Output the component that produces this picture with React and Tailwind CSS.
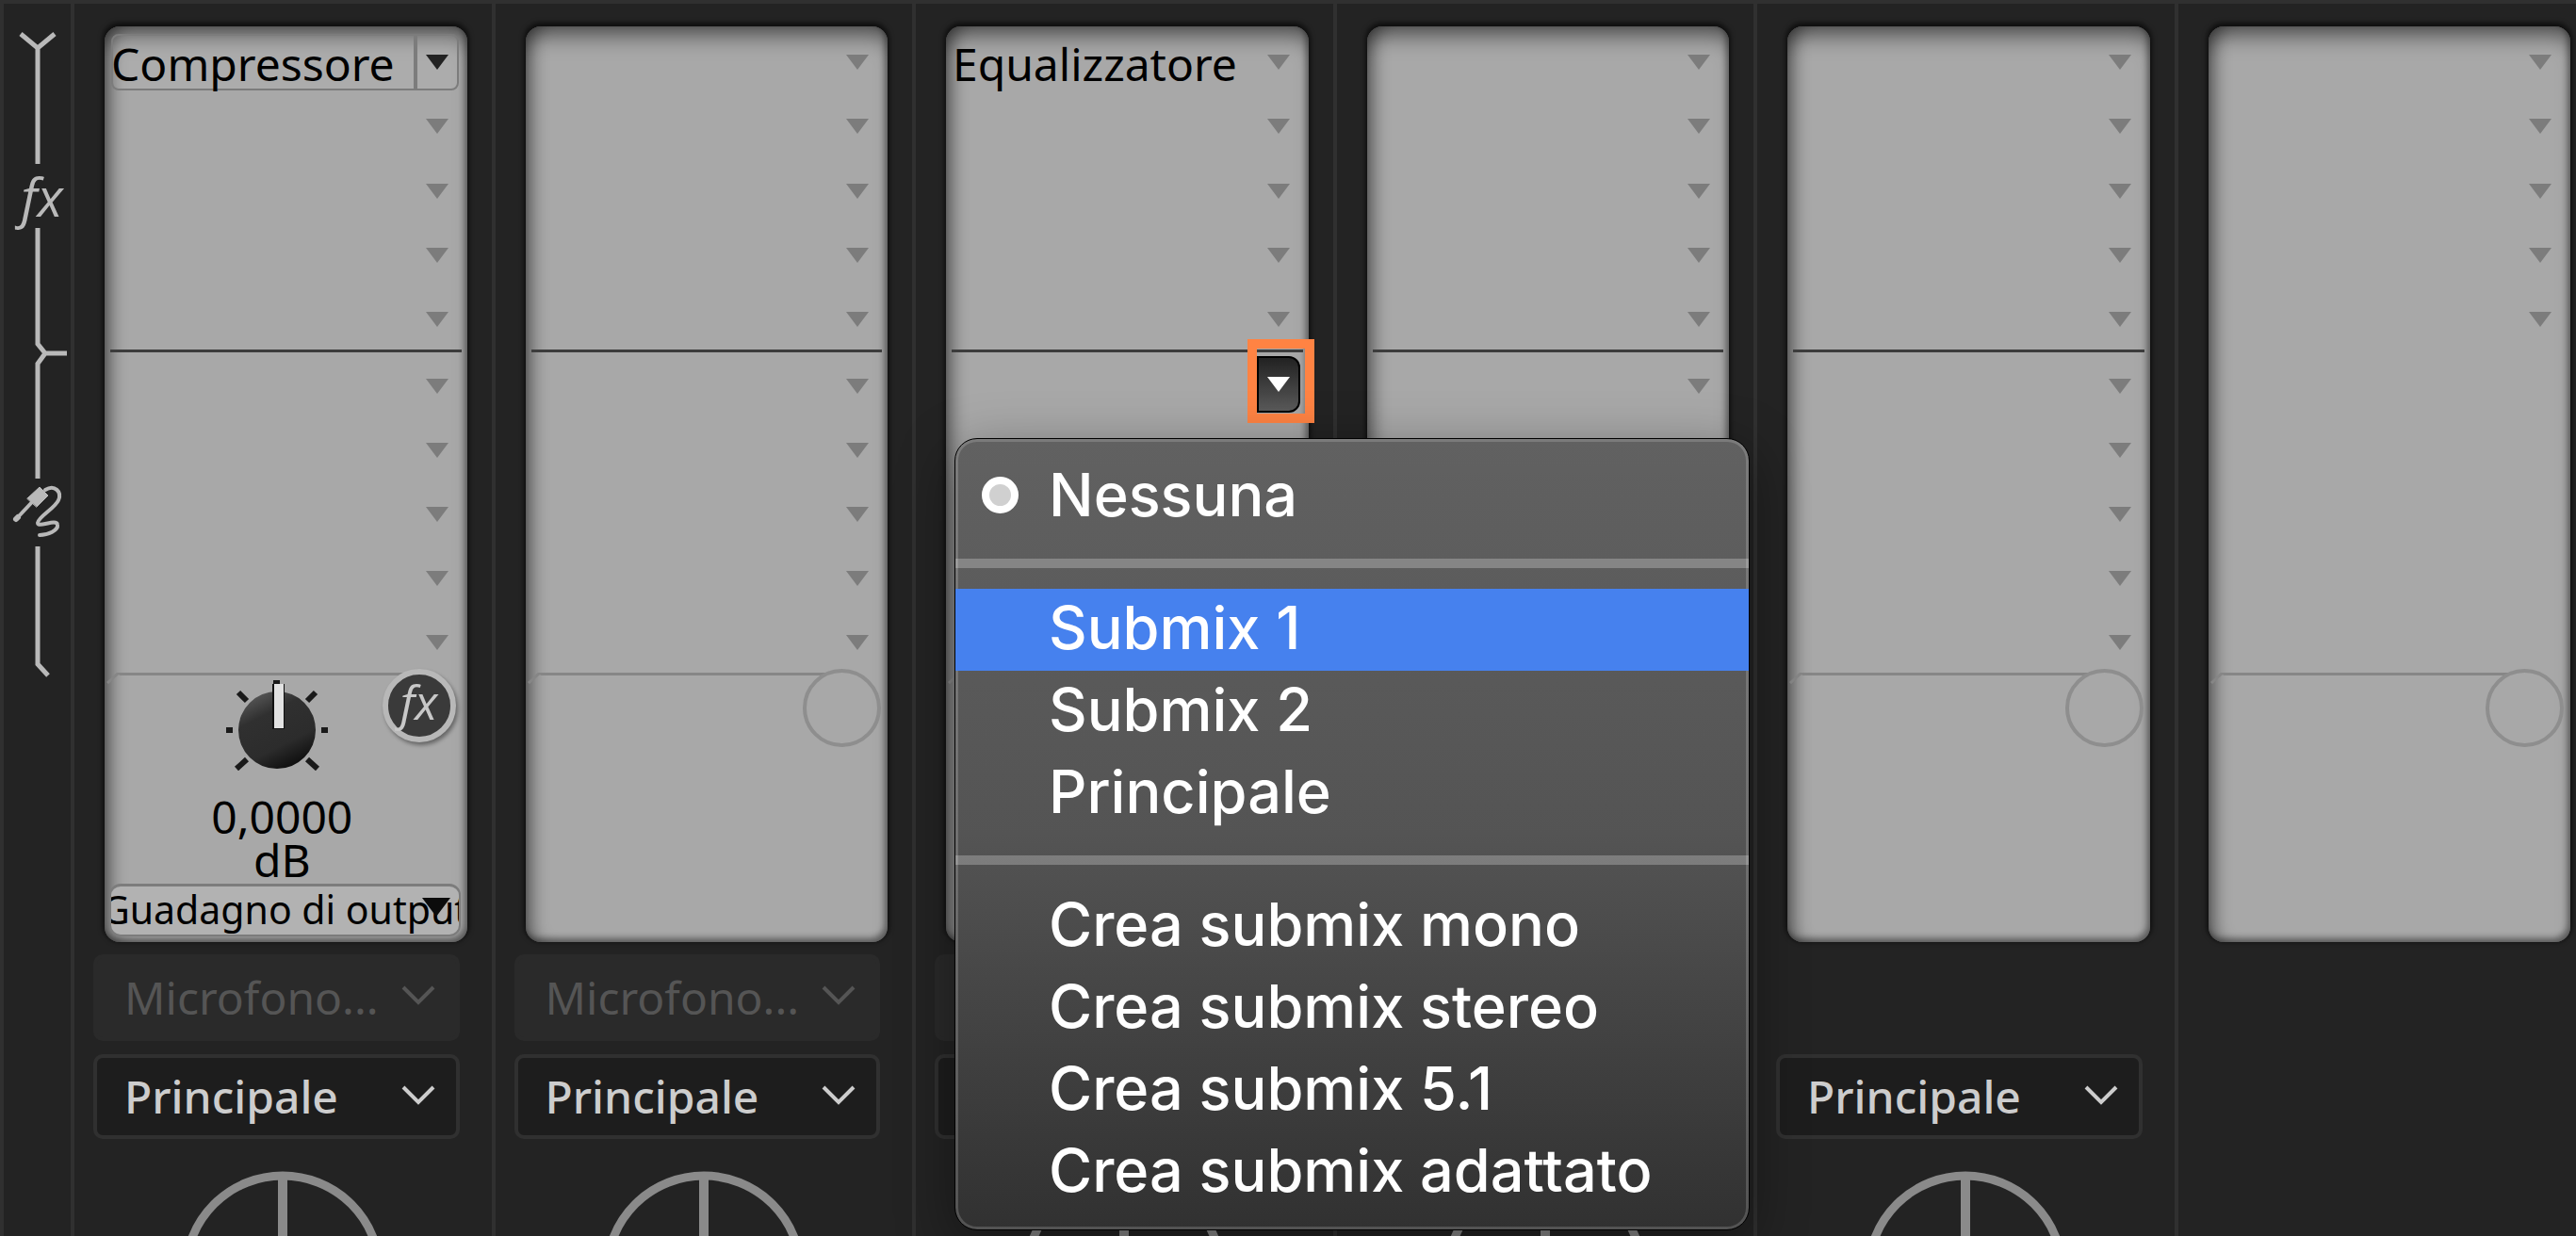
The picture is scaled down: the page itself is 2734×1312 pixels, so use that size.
import React from "react";

// An empty route is a select without a current choice, null leaves the place free
const strips = [
  { id: 1, effects: ["Compressore"], sends: true, knob: true, input: "Microfono...", output: "Principale" },
  { id: 2, effects: [], sends: true, input: "Microfono...", output: "Principale" },
  { id: 3, effects: ["Equalizzatore"], sends: true, menu: true, input: "", output: "" },
  { id: 4, effects: [], sends: true, input: "", output: "" },
  { id: 5, effects: [], sends: true, input: null, output: "Principale" },
  { id: 6, effects: [], sends: false, input: null, output: null },
];

const menuGroups = [
  ["Nessuna"],
  ["Submix 1", "Submix 2", "Principale"],
  ["Crea submix mono", "Crea submix stereo", "Crea submix 5.1", "Crea submix adattato"],
];

const SLOTS = [0, 1, 2, 3, 4];

function Triangle({ className }) {
  return (
    <svg viewBox="0 0 24 16" className={className} aria-hidden="true">
      <path d="M0 0H24L12 16Z" fill="currentColor" />
    </svg>
  );
}

function Rail() {
  return (
    <aside className="flex w-[71px] shrink-0 flex-col pt-7 text-[#b9b9b9]">
      <svg viewBox="4 32 71 142" className="h-[142px] w-full" fill="none" stroke="currentColor" strokeWidth="5">
        <path d="M22 36L40 51L58 36M40 50V174" />
      </svg>
      <div className="h-[68px] pl-2.5 text-center font-['Open_Sans',sans-serif] text-[56px] leading-[68px] font-medium italic">
        fx
      </div>
      <svg viewBox="4 242 71 268" className="h-[268px] w-full" fill="none" stroke="currentColor" strokeWidth="5">
        <path d="M40 242V365L48 375L40 386V508M47 375H71" />
      </svg>
      {/* patch cable */}
      <svg viewBox="3 510 71 68" className="h-[68px] w-full" fill="none" stroke="currentColor" strokeLinecap="round">
        <path d="M17 550L33 533" strokeWidth="4" />
        <path d="M16 551L18 549" strokeWidth="6" />
        <path d="M28 529L41 517L50 526L38 538Z" fill="currentColor" strokeWidth="1" />
        <path
          d="M47 520C57 514 65 522 61 531C57 540 40 548 39 555C39 561 59 550 60 557C61 563 50 568 41 568"
          strokeWidth="4"
        />
      </svg>
      <svg viewBox="4 578 71 144" className="h-[144px] w-full" fill="none" stroke="currentColor" strokeWidth="5">
        <path d="M40 580V705L51 717" />
      </svg>
    </aside>
  );
}

function SendMenu() {
  return (
    <div
      role="menu"
      className="absolute top-[91px] left-[9px] z-20 w-[844px] overflow-hidden rounded-3xl border border-black bg-linear-to-b from-[#616161] via-[#545454] to-[#313131] pt-[18px] pb-[17px] shadow-[0_16px_60px_rgba(0,0,0,0.4),inset_0_0_0_3px_rgba(255,255,255,0.17)]"
    >
      {menuGroups.map((group, g) => (
        <div key={group[0]}>
          {g > 0 && <hr className="my-[22px] h-[10px] border-0 bg-white/25" />}
          {group.map((item) => (
            <button
              key={item}
              type="button"
              role="menuitem"
              className={`flex h-[87px] w-full items-center pb-1 pl-7 text-left font-['Inter',sans-serif] text-[63px] leading-[83px] font-medium text-white ${
                item === "Submix 1" ? "bg-[#4681ee]" : ""
              }`}
            >
              <span className="flex w-[71px] shrink-0">
                {item === "Nessuna" && (
                  <span className="size-[39px] rounded-full border-8 border-white bg-[#d0d0d0]" />
                )}
              </span>
              {item}
            </button>
          ))}
        </div>
      ))}
    </div>
  );
}

function Slot({ name, boxed, active, label }) {
  return (
    <div className="relative flex min-h-0 flex-1 pt-1 pr-[9px] pl-[7px]">
      <div
        className={`flex min-w-0 flex-1 ${
          boxed ? "mt-0.5 mb-0.5 rounded-lg border-2 border-[#7c7c7c] bg-white/5" : ""
        }`}
      >
        <div
          className={`mr-2 flex min-w-0 flex-1 items-center pt-1 text-[48px] leading-[56px] whitespace-nowrap text-black ${
            boxed ? "-ml-0.5" : ""
          }`}
        >
          {name}
        </div>
        <button
          type="button"
          aria-label={label}
          className={`flex w-[46px] shrink-0 items-center justify-center ${
            boxed ? "border-l-4 border-[#7c7c7c] text-[#222]" : ""
          } ${
            active
              ? "h-[60px] rounded-r-xl border-2 border-black bg-linear-to-b from-[#222] to-[#5a5a5a] text-white"
              : ""
          } ${!boxed && !active ? "text-[#7c7c7c]" : ""}`}
        >
          <Triangle className="h-4 w-6" />
        </button>
      </div>
      {active && (
        <>
          <span className="pointer-events-none absolute -top-3.5 -right-1.5 z-10 h-[89px] w-[71px] border-10 border-[#ff8343]" />
          <SendMenu />
        </>
      )}
    </div>
  );
}

function GainKnob() {
  return (
    <div className="relative -mt-1 ml-[129px] w-[108px]">
      <input type="range" min="-60" max="60" defaultValue="0" aria-label="Guadagno" className="sr-only" />
      <svg viewBox="0 0 108 96" className="h-24 w-[108px]">
        <defs>
          <linearGradient id="knob" x1="0.2" y1="0" x2="0.7" y2="1">
            <stop offset="0" stopColor="#5c5c5c" />
            <stop offset="0.3" stopColor="#303030" />
            <stop offset="0.7" stopColor="#2c2c2c" />
            <stop offset="1" stopColor="#0c0c0c" />
          </linearGradient>
        </defs>
        <path
          d="M50 2H57M0 53H7M101 53H108M13 13L22 22M95 13L86 22M22 84L11 94M86 84L97 94"
          stroke="#1a1a1a"
          strokeWidth="6"
          fill="none"
        />
        <circle cx="54" cy="53" r="41" fill="url(#knob)" />
        <path d="M49 4H62V52H49Z" fill="#111" />
        <path d="M51 4H61V51H51Z" fill="#e2e2e2" />
      </svg>
    </div>
  );
}

function StripFooter({ knob }) {
  return (
    <div className="relative h-[286px]">
      <div className="flex h-3 pr-16 pl-0.5 text-[#868686]">
        <svg viewBox="0 0 14 12" className="h-3 w-3.5" fill="none" stroke="currentColor" strokeWidth="3">
          <path d="M1 11L12 1H14" />
        </svg>
        <div className="h-[3px] flex-1 bg-current" />
      </div>
      {knob ? (
        <>
          <GainKnob />
          <button
            type="button"
            className="absolute -top-1 right-3 flex size-[78px] items-center justify-center rounded-full border-[6px] border-[#b8b8b8] bg-[#3a3a3a] pb-2 font-['Open_Sans',sans-serif] text-[50px] leading-[56px] text-[#c8c8c8] italic shadow-[2px_3px_4px_rgba(0,0,0,0.4)]"
          >
            fx
          </button>
          <div className="mt-[26px] mr-2 text-center text-[48px] leading-[46px] text-black">
            0,0000
            <br />
            dB
          </div>
          <button
            type="button"
            className="relative mt-0.5 mr-2 ml-[5px] flex h-14 w-[373px] items-center justify-center overflow-hidden rounded-xl border-2 border-t-[3px] border-[#7c7c7c] bg-[#b2b2b2] pb-1 text-[41px] leading-[48px] text-black"
          >
            <span className="shrink-0 whitespace-nowrap">Guadagno di output</span>
            <Triangle className="absolute top-3 right-1.5 h-5 w-9 text-[#0c0c0c]" />
          </button>
        </>
      ) : (
        <span className="absolute -top-1 right-[7px] size-[83px] rounded-full border-4 border-[#8e8e8e]" />
      )}
    </div>
  );
}

function RouteSelect({ value, label, disabled = false }) {
  return (
    <div className="relative">
      <select
        disabled={disabled}
        aria-label={label}
        className={`block w-full appearance-none rounded-[10px] border-4 pl-[29px] text-[48px] leading-[66px] opacity-100 ${
          disabled
            ? "h-[92px] border-[#2a2a2a] bg-[#2a2a2a] text-[#555]"
            : "h-[90px] border-[#303030] bg-[#1d1d1d] font-medium text-[#cdcdcd]"
        }`}
      >
        <option>{value}</option>
      </select>
      <svg
        viewBox="0 0 36 22"
        className={`pointer-events-none absolute top-8 right-[26px] h-[22px] w-9 ${disabled ? "text-[#555]" : "text-[#cdcdcd]"}`}
        fill="none"
        stroke="currentColor"
        strokeWidth="4"
      >
        <path d="M2 3L18 19L34 3" />
      </svg>
    </div>
  );
}

function PanDial() {
  return (
    <div className="relative mx-auto mt-[34px] w-[216px]">
      <input type="range" min="-100" max="100" defaultValue="0" aria-label="Bilanciamento" className="sr-only" />
      <svg viewBox="0 0 216 216" className="size-[216px]" fill="none" stroke="#8a8a8a">
        <circle cx="108" cy="108" r="103" strokeWidth="9" />
        <path d="M108 6V108" strokeWidth="10" />
      </svg>
    </div>
  );
}

function Strip({ strip }) {
  return (
    <section className="min-w-0 flex-1 border-l-4 border-[#303030] pt-6">
      <div className="mr-[26px] ml-8 rounded-2xl bg-[#a8a8a8] pt-0.5 shadow-[0_-2px_5px_2px_rgba(0,0,0,0.6),inset_0_20px_22px_-10px_rgba(0,0,0,0.5),inset_14px_0_18px_-8px_rgba(0,0,0,0.45),inset_-3px_-4px_6px_rgba(0,0,0,0.4)]">
        <div className="flex h-[341px] flex-col">
          {SLOTS.map((i) => (
            <Slot
              key={i}
              name={strip.effects[i]}
              boxed={strip.knob && i === 0}
              label={`Effetto ${i + 1}`}
            />
          ))}
        </div>
        <div className={`mx-1.5 h-[3px] ${strip.sends ? "bg-[#3c3c3c]" : ""}`} />
        <div className="flex h-[340px] flex-col">
          {strip.sends &&
            SLOTS.map((i) => (
              <Slot key={i} active={strip.menu && i === 0} label={`Mandata ${i + 1}`} />
            ))}
        </div>
        <StripFooter knob={strip.knob} />
      </div>

      <div className="mt-[13px] mr-[34px] ml-5">
        {strip.input !== null ? (
          <RouteSelect value={strip.input} label="Ingresso" disabled />
        ) : (
          <div className="h-[92px]" />
        )}
        <div className="mt-3.5">
          {strip.output !== null && <RouteSelect value={strip.output} label="Uscita" />}
        </div>
      </div>
      {strip.output !== null && <PanDial />}
    </section>
  );
}

export default function App() {
  return (
    <main className="flex h-screen overflow-hidden border-t-4 border-l-4 border-[#303030] bg-[#232323] font-['Noto_Sans',sans-serif]">
      <Rail />
      <div className="-mr-5 flex min-w-0 flex-1">
        {strips.map((strip) => (
          <Strip key={strip.id} strip={strip} />
        ))}
      </div>
    </main>
  );
}
